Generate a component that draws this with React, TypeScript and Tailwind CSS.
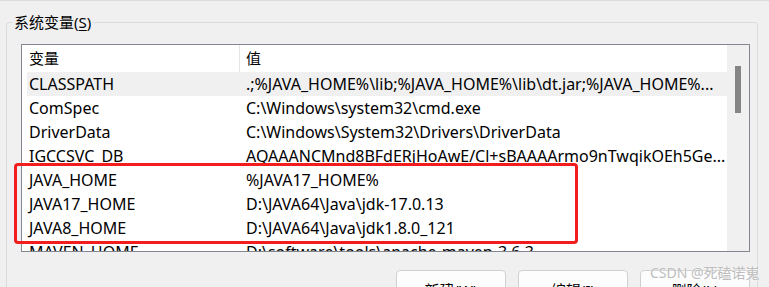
const rows = [
  { name: "CLASSPATH", value: ".;%JAVA_HOME%\\lib;%JAVA_HOME%\\lib\\dt.jar;%JAVA_HOME%...", selected: true },
  { name: "ComSpec", value: "C:\\Windows\\system32\\cmd.exe" },
  { name: "DriverData", value: "C:\\Windows\\System32\\Drivers\\DriverData" },
  { name: "IGCCSVC_DB", value: "AQAAANCMnd8BFdERjHoAwE/Cl+sBAAAArmo9nTwqikOEh5Ge..." },
  { name: "JAVA_HOME", value: "%JAVA17_HOME%" },
  { name: "JAVA17_HOME", value: "D:\\JAVA64\\Java\\jdk-17.0.13" },
  { name: "JAVA8_HOME", value: "D:\\JAVA64\\Java\\jdk1.8.0_121" },
  { name: "MAVEN_HOME", value: "D:\\software\\tools\\apache-maven-3.6.3" },
];

const buttons = [
  { label: "新建", key: "W" },
  { label: "编辑", key: "I" },
  { label: "删除", key: "L" },
];

export default function App() {
  return (
    <div className="relative w-[769px] h-[287px] overflow-hidden bg-[#f0f0f0] border-t border-[#dcdcdc] text-[15px] text-black font-['Noto_Sans','Noto_Sans_CJK_SC',sans-serif]">
      {/* 系统变量 group */}
      <fieldset className="ml-[6px] mt-[11px] w-[752px] h-[300px] border border-[#dcdcdc] rounded-[3px]">
        <legend className="ml-[5px] px-[2px] leading-[20px]">
          系统变量(<span className="underline underline-offset-2">S</span>)
        </legend>

        {/* list */}
        <div className="ml-[14px] mt-[12px] w-[729px] h-[208px] border border-[#828790] bg-white flex">
          <div className="flex-1 overflow-hidden">
            <div className="flex h-[27px] items-center">
              <div className="w-[217px] pl-[7px] leading-none">变量</div>
              <div className="w-px h-full bg-[#e5e5e5]" />
              <div className="pl-[6px] leading-none">值</div>
            </div>
            {rows.map((r) => (
              <div
                key={r.name}
                className={`ml-[5px] flex h-[24px] items-center whitespace-nowrap text-[16px] ${r.selected ? "bg-[#f0f0f0]" : ""}`}
              >
                <div className="w-[219px] pl-[2px]">{r.name}</div>
                <div className="flex-1 overflow-hidden">{r.value}</div>
              </div>
            ))}
          </div>
          {/* scrollbar */}
          <div className="w-[22px] bg-[#f0f0f0] pt-[21px] flex justify-center">
            <div className="w-[6px] h-[47px] bg-[#858585]" />
          </div>
        </div>

        {/* buttons */}
        <div className="ml-[14px] mt-[18px] w-[729px] flex justify-end gap-[12px]">
          {buttons.map((b) => (
            <div
              key={b.key}
              className="w-[110px] h-[32px] rounded-[4px] border border-[#d0d0d0] bg-[#fdfdfd] flex items-center justify-center pt-[8px] whitespace-nowrap"
            >
              {b.label}(<span className="underline">{b.key}</span>)
            </div>
          ))}
        </div>
      </fieldset>

      {/* red highlight annotation */}
      <div className="absolute left-[14px] top-[162px] w-[564px] h-[81px] border-[3px] border-[#f41d1d] rounded-[4px]" />

      {/* watermark */}
      <div className="absolute left-[650px] top-[263px] whitespace-nowrap text-[14px] leading-[18px] text-[#bdbdbd] [text-shadow:0_0_2px_#fff]">
        CSDN @死磕诺嵬
      </div>
    </div>
  );
}
